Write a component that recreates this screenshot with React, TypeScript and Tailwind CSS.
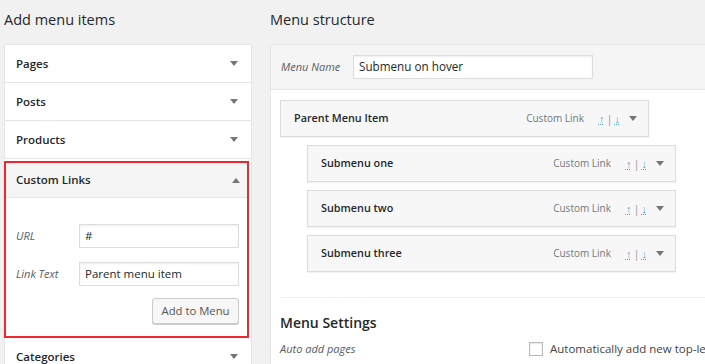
import React from "react";

function Caret({ up = false, className = "" }: { up?: boolean; className?: string }) {
  return (
    <svg width="8" height="5" viewBox="0 0 8 5" className={`shrink-0 ${className}`}>
      {up ? <path d="M0 5 L4 0 L8 5 Z" fill="#72777c" /> : <path d="M0 0 L8 0 L4 5 Z" fill="#72777c" />}
    </svg>
  );
}

function AccRow({ title }: { title: string }) {
  return (
    <div className="h-[38px] shrink-0 border-b border-[#e5e5e5] bg-white flex items-center pl-[11px] pr-[13px]">
      <span className="flex-1 text-[11.5px] font-semibold">{title}</span>
      <Caret />
    </div>
  );
}

function MenuItem({ title, sub = false }: { title: string; sub?: boolean }) {
  return (
    <div
      className={`h-[37px] shrink-0 w-[369px] border border-[#dcdcdc] bg-[#f7f7f7] shadow-[0_1px_1px_rgba(0,0,0,0.05)] flex items-center pl-[13px] pr-[11px] ${
        sub ? "ml-[27px]" : ""
      }`}
    >
      <span className="flex-1 text-[10.8px] font-semibold">{title}</span>
      <span className="text-[10px] text-[#72777c]">Custom Link</span>
      <span className="ml-[15px] flex items-center text-[11px] leading-none text-[#5d9ccc]">
        <span className="underline decoration-dotted">↑</span>
        <span className="mx-[2px] text-[#999]">|</span>
        <span className="underline decoration-dotted">↓</span>
      </span>
      <Caret className="ml-[9px]" />
    </div>
  );
}

export default function App() {
  return (
    <div className="w-[705px] h-[364px] overflow-hidden bg-[#f1f1f1] text-[#23282d] flex font-['Open_Sans',sans-serif]">
      {/* Left column */}
      <div className="ml-[4px] w-[248px] shrink-0 flex flex-col">
        <h2 className="h-[44px] shrink-0 flex items-center pb-[5px] text-[14.5px] font-normal">Add menu items</h2>
        <div className="shrink-0 border-x border-t border-[#e5e5e5] bg-white">
          <AccRow title="Pages" />
          <AccRow title="Posts" />
          <AccRow title="Products" />
          <div className="bg-white pt-[2px] pr-[2px] -ml-[1px]">
            <div className="border-2 border-[#f0282d]">
              <div className="h-[35px] bg-[#f5f5f5] border-b border-[#e5e5e5] flex items-center pl-[10px] pr-[7px]">
                <span className="flex-1 text-[11.5px] font-semibold">Custom Links</span>
                <Caret up />
              </div>
              <div className="pt-[26px] pb-[12px] pl-[10px] pr-[8px] flex flex-col">
                <div className="flex items-center">
                  <span className="w-[63px] shrink-0 text-[11px] italic text-[#555d66]">URL</span>
                  <div className="w-[160px] h-[24px] border border-[#dddddd] shadow-[inset_0_1px_2px_rgba(0,0,0,0.07)] flex items-center px-[5px] text-[11.5px]">
                    #
                  </div>
                </div>
                <div className="flex items-center mt-[14px]">
                  <span className="w-[63px] shrink-0 text-[11px] italic text-[#555d66]">Link Text</span>
                  <div className="w-[160px] h-[24px] border border-[#dddddd] shadow-[inset_0_1px_2px_rgba(0,0,0,0.07)] flex items-center px-[5px] text-[11.5px]">
                    Parent menu item
                  </div>
                </div>
                <div className="flex justify-end mt-[12px]">
                  <div className="w-[87px] h-[26px] border border-[#cccccc] bg-[#f7f7f7] rounded-[3px] shadow-[0_1px_0_#cccccc] flex items-center justify-center text-[11.3px] text-[#555]">
                    Add to Menu
                  </div>
                </div>
              </div>
            </div>
          </div>
          <AccRow title="Categories" />
        </div>
      </div>

      {/* Right column */}
      <div className="ml-[18px] flex-1 flex flex-col min-w-0">
        <h2 className="h-[44px] shrink-0 flex items-center pb-[5px] text-[14.5px] font-normal whitespace-nowrap">Menu structure</h2>
        <div className="border-l border-t border-[#e5e5e5] flex-1 flex flex-col">
          <div className="h-[45px] shrink-0 bg-[#f5f5f5] border-b border-[#e5e5e5] flex items-center pl-[10px]">
            <span className="w-[72px] shrink-0 text-[11px] italic text-[#555d66]">Menu Name</span>
            <div className="w-[240px] h-[24px] bg-white border border-[#dddddd] shadow-[inset_0_1px_2px_rgba(0,0,0,0.07)] flex items-center px-[5px] text-[11.7px]">
              Submenu on hover
            </div>
          </div>
          <div className="flex-1 bg-white pl-[9px] pt-[10px] flex flex-col">
            <div className="flex flex-col gap-[8px]">
              <MenuItem title="Parent Menu Item" />
              <MenuItem title="Submenu one" sub />
              <MenuItem title="Submenu two" sub />
              <MenuItem title="Submenu three" sub />
            </div>
            <div className="mt-[25px] border-t border-[#eeeeee]">
              <div className="h-[28px] mt-[10px] flex items-center text-[14px] font-semibold whitespace-nowrap">Menu Settings</div>
              <div className="h-[22px] mt-[2px] flex items-center whitespace-nowrap">
                <span className="w-[249px] shrink-0 text-[11px] italic text-[#555d66]">Auto add pages</span>
                <span className="w-[14px] h-[14px] shrink-0 border border-[#b4b9be] bg-white shadow-[inset_0_1px_2px_rgba(0,0,0,0.1)]" />
                <span className="ml-[7px] shrink-0 text-[11.5px] text-[#444]">Automatically add new top-level pages to this menu</span>
              </div>
            </div>
          </div>
        </div>
      </div>
    </div>
  );
}
